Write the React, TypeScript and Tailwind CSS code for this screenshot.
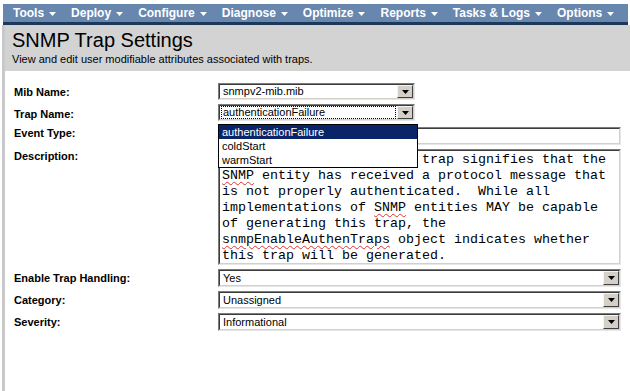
import React from 'react';

const navItems = ['Tools', 'Deploy', 'Configure', 'Diagnose', 'Optimize', 'Reports', 'Tasks & Logs', 'Options'];

const NavArrow = () => (
    <svg width="7" height="4" viewBox="0 0 7 4" className="ml-[5px] mt-[1px]">
        <path d="M0 0h7L3.5 4z" fill="#fff" />
    </svg>
);

// old windows style drop button
const DropButton = () => (
    <div className="flex h-full w-[16px] shrink-0 items-center justify-center border border-t-[#f4f4f4] border-l-[#f4f4f4] border-r-[#404040] border-b-[#404040] bg-[#d4d0c8]">
        <svg width="7" height="4" viewBox="0 0 7 4">
            <path d="M0 0h7L3.5 4z" fill="#000" />
        </svg>
    </div>
);

const Inset = ({ className = '', children }: { className?: string; children?: React.ReactNode }) => (
    <div className={`border border-t-[#7c7c7c] border-l-[#7c7c7c] border-r-[#e6e6e6] border-b-[#e6e6e6] ${className}`}>
        <div className="flex h-full w-full border border-t-[#3c3c3c] border-l-[#3c3c3c] border-r-[#d4d0c8] border-b-[#d4d0c8] bg-white">
            {children}
        </div>
    </div>
);

const Select = ({ value, className = '', focused = false }: { value: string; className?: string; focused?: boolean }) => (
    <Inset className={className}>
        <div className="flex min-w-0 flex-1 items-center px-[1px]">
            <span className={`flex h-[13px] flex-1 items-center pl-[1px] text-[11px] leading-[13px] ${focused ? 'border border-dotted border-black' : 'border border-transparent'}`}>
                {value}
            </span>
        </div>
        <DropButton />
    </Inset>
);

const Row = ({ label, children, className = '', labelClass = '', top = false }: { label: string; children: React.ReactNode; className?: string; labelClass?: string; top?: boolean }) => (
    <div className={`flex ${top ? 'items-start' : 'items-center'} ${className}`}>
        <div className={`w-[204px] shrink-0 text-[11px] font-bold leading-[13px] text-black ${top ? 'pt-[1px]' : ''} ${labelClass}`}>{label}</div>
        {children}
    </div>
);

const Sq = ({ children }: { children: React.ReactNode }) => (
    <span className="underline decoration-wavy decoration-[#e03030] decoration-1 underline-offset-[2px]">{children}</span>
);

const descLines: React.ReactNode[] = [
    'An authenticationFailure trap signifies that the',
    <><Sq>SNMP</Sq> entity has received a protocol message that</>,
    'is not properly authenticated.  While all',
    <>implementations of <Sq>SNMP</Sq> entities MAY be capable</>,
    'of generating this trap, the',
    <><Sq>snmpEnableAuthenTraps</Sq> object indicates whether</>,
    'this trap will be generated.',
];

export default function App() {
    return (
        <div className="h-[391px] w-[630px] overflow-hidden bg-white pl-[2px] pt-[4px] font-['Liberation_Sans',Arial,sans-serif] text-black">
            <div className="ml-[1px] mr-[2px] flex h-[21px] items-center gap-[15px] border-b-[3px] border-[#1e385a] bg-[#6787af] pl-[10px]">
                {navItems.map((item) => (
                    <div key={item} className="flex items-center text-[12px] font-bold leading-none text-white">
                        {item}
                        <NavArrow />
                    </div>
                ))}
            </div>

            <div className="h-[366px] border-l-[3px] border-[#c9c9c9]">
                <div className="bg-[#d3d3d3] pb-[5px] pl-[7px] pt-[3px]">
                    <h1 className="text-[20px] leading-[24px] font-normal">SNMP Trap Settings</h1>
                    <p className="mt-[1px] text-[11px] leading-[13px]">View and edit user modifiable attributes associated with traps.</p>
                </div>

                <div className="flex flex-col gap-[4px] pl-[9px] pt-[12px]">
                    <Row label="Mib Name:" labelClass="mt-[1px]">
                        <Select value="snmpv2-mib.mib" className="h-[17px] w-[197px]" />
                    </Row>
                    <Row label="Trap Name:" className="relative z-10" labelClass="mt-[3px]">
                        <div className="relative">
                            <Select value="authenticationFailure" className="h-[17px] w-[197px]" focused />
                            <div className="absolute left-0 top-[20px] w-[200px] border border-black bg-white text-[11px] leading-[14px]">
                                <div className="bg-[#0a246a] pl-[3px] text-white">authenticationFailure</div>
                                <div className="pl-[3px]">coldStart</div>
                                <div className="pl-[3px]">warmStart</div>
                            </div>
                        </div>
                    </Row>
                    <Row label="Event Type:" className="mt-[2px]" labelClass="mb-[5px]">
                        <Inset className="h-[18px] w-[403px]" />
                    </Row>
                    <Row label="Description:" top>
                        <Inset className="h-[116px] w-[403px]">
                            <div className="px-[2px] pt-[1px] font-['Liberation_Mono','Courier_New',monospace] text-[13.33px] leading-[16px] whitespace-pre">
                                {descLines.map((l, i) => (
                                    <div key={i}>{l}</div>
                                ))}
                            </div>
                        </Inset>
                    </Row>
                    <Row label="Enable Trap Handling:">
                        <Select value="Yes" className="h-[18px] w-[403px]" />
                    </Row>
                    <Row label="Category:">
                        <Select value="Unassigned" className="h-[18px] w-[403px]" />
                    </Row>
                    <Row label="Severity:">
                        <Select value="Informational" className="h-[18px] w-[403px]" />
                    </Row>
                </div>
            </div>
        </div>
    );
}
